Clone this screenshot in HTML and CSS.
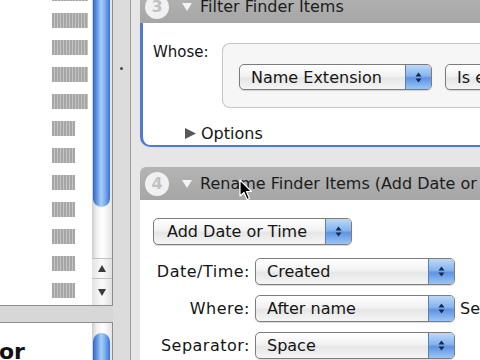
FILE: index.html
```html
<!DOCTYPE html>
<html lang="en">
<head>
  <meta charset="UTF-8">
  <title>Automator workflow</title>
  <link rel="stylesheet" href="styles.css">
</head>
<body>
  <div class="window">
    <div class="sidebar">
      <div class="pane pane-top">
        <div class="list">
          <div class="icon wide"></div>
          <div class="icon wide"></div>
          <div class="icon wide"></div>
          <div class="icon wide"></div>
          <div class="icon wide"></div>
          <div class="icon"></div>
          <div class="icon"></div>
          <div class="icon"></div>
          <div class="icon"></div>
          <div class="icon"></div>
          <div class="icon"></div>
          <div class="icon"></div>
          <div class="icon"></div>
        </div>
        <div class="scroller">
          <div class="thumb thumb-end"></div>
          <div class="track"></div>
          <div class="arrow arrow-up">
            <svg width="8" height="7" viewBox="0 0 8 7"><polygon points="0,7 4,0 8,7" fill="#3a3a3a"/></svg>
          </div>
          <div class="arrow arrow-down">
            <svg width="8" height="7" viewBox="0 0 8 7"><polygon points="0,0 8,0 4,7" fill="#3a3a3a"/></svg>
          </div>
        </div>
      </div>
      <div class="pane pane-bottom">
        <div class="list list-text">
          <div class="desc">or</div>
        </div>
        <div class="scroller">
          <div class="track track-top"></div>
          <div class="thumb thumb-start"></div>
        </div>
      </div>
    </div>

    <div class="splitter"><span class="dimple"></span></div>

    <div class="workflow">
      <!-- 3: Filter Finder Items -->
      <div class="action action-first selected">
        <div class="action-head">
          <span class="step">3</span>
          <svg class="disclose" width="10" height="8" viewBox="0 0 10 8"><polygon points="0,0 10,0 5,8" fill="#f4f4f4"/></svg>
          <span class="title">Filter Finder Items</span>
        </div>
        <div class="action-body">
          <div class="whose">
            <span class="whose-label">Whose:</span>
            <div class="criteria">
              <div class="popup w-name">
                <span class="popup-label">Name Extension</span>
                <span class="stepper">
                  <svg width="7" height="11" viewBox="0 0 7 11"><polygon points="0.5,4.5 3.5,0.5 6.5,4.5" fill="#17284a"/><polygon points="0.5,6.5 3.5,10.5 6.5,6.5" fill="#17284a"/></svg>
                </span>
              </div>
              <div class="popup w-is">
                <span class="popup-label">Is equal to</span>
              </div>
            </div>
          </div>
          <div class="options">
            <svg width="11" height="11" viewBox="0 0 11 11"><polygon points="0,0 11,5.5 0,11" fill="#585858"/></svg>
            <span>Options</span>
          </div>
        </div>
      </div>

      <!-- 4: Rename Finder Items -->
      <div class="action">
        <div class="action-head">
          <span class="step">4</span>
          <svg class="disclose" width="10" height="8" viewBox="0 0 10 8"><polygon points="0,0 10,0 5,8" fill="#f4f4f4"/></svg>
          <span class="title">Rename Finder Items (Add Date or Time)</span>
        </div>
        <div class="action-body body-rename">
          <div class="popup w-add">
            <span class="popup-label">Add Date or Time</span>
            <span class="stepper">
              <svg width="7" height="11" viewBox="0 0 7 11"><polygon points="0.5,4.5 3.5,0.5 6.5,4.5" fill="#17284a"/><polygon points="0.5,6.5 3.5,10.5 6.5,6.5" fill="#17284a"/></svg>
            </span>
          </div>
          <div class="fields">
            <div class="field">
              <span class="field-label">Date/Time:</span>
              <div class="popup w-field">
                <span class="popup-label">Created</span>
                <span class="stepper">
                  <svg width="7" height="11" viewBox="0 0 7 11"><polygon points="0.5,4.5 3.5,0.5 6.5,4.5" fill="#17284a"/><polygon points="0.5,6.5 3.5,10.5 6.5,6.5" fill="#17284a"/></svg>
                </span>
              </div>
            </div>
            <div class="field">
              <span class="field-label">Where:</span>
              <div class="popup w-field">
                <span class="popup-label">After name</span>
                <span class="stepper">
                  <svg width="7" height="11" viewBox="0 0 7 11"><polygon points="0.5,4.5 3.5,0.5 6.5,4.5" fill="#17284a"/><polygon points="0.5,6.5 3.5,10.5 6.5,6.5" fill="#17284a"/></svg>
                </span>
              </div>
              <span class="field-after">Separator:</span>
            </div>
            <div class="field">
              <span class="field-label">Separator:</span>
              <div class="popup w-field">
                <span class="popup-label">Space</span>
                <span class="stepper">
                  <svg width="7" height="11" viewBox="0 0 7 11"><polygon points="0.5,4.5 3.5,0.5 6.5,4.5" fill="#17284a"/><polygon points="0.5,6.5 3.5,10.5 6.5,6.5" fill="#17284a"/></svg>
                </span>
              </div>
            </div>
          </div>
        </div>
      </div>
    </div>

    <!-- mouse pointer over the header -->
    <svg class="cursor" width="14" height="22" viewBox="0 0 14 22">
      <polygon points="1,1 1,17 5,13.5 8,20.5 10.5,19.5 7.5,12.5 12.5,12.5" fill="#000" stroke="#fff" stroke-width="1.2" stroke-linejoin="round"/>
    </svg>
  </div>
</body>
</html>
```

FILE: styles.css
```css
body {
  margin: 0;
  width: 480px;
  height: 360px;
  overflow: hidden;
  font-family: "DejaVu Sans", "Liberation Sans", sans-serif;
  font-size: 16px;
  color: #151515;
}
.window {
  display: flex;
  height: 360px;
  position: relative;
  overflow: hidden;
  background: #e4e4e4;
}

/* left side: action list + description */
.sidebar {
  width: 113px;
  flex: none;
  display: flex;
  flex-direction: column;
  gap: 16px;
  background: #d7d7d7;
}
.pane {
  display: flex;
  background: #fff;
  border-right: 1px solid #8e8e8e;
  overflow: hidden;
}
.pane-top {
  height: 305px;
  flex: none;
  border-bottom: 1px solid #8e8e8e;
}
.pane-bottom {
  flex: 1;
  border-top: 1px solid #8e8e8e;
}
.list {
  width: 92px;
  flex: none;
  display: flex;
  flex-direction: column;
  gap: 12px;
  padding-left: 52px;
  box-sizing: border-box;
}
.icon {
  width: 23px;
  height: 15px;
  flex: none;
  background: repeating-linear-gradient(90deg, #a6a6a6 0 2px, #c4c4c4 2px 3px);
}
.icon.wide {
  width: 36px;
}
.icon:first-child {
  margin-top: -14px;
}
.list-text {
  padding-left: 0;
  padding-top: 18px;
}
.desc {
  margin-left: -1px;
  font-size: 22px;
  line-height: 22px;
  font-weight: bold;
  color: #111;
}

.scroller {
  width: 20px;
  flex: none;
  display: flex;
  flex-direction: column;
  background: linear-gradient(90deg, #cdcdcd, #f2f2f2 25%, #fff 55%, #e4e4e4);
}
.thumb {
  margin: 0 2px 0 1px;
  background: linear-gradient(90deg, #2f63c4, #5f95e6 22%, #aacdf7 48%, #78acf0 72%, #3a70d2);
}
.thumb-end {
  height: 207px;
  flex: none;
  border-radius: 0 0 9px 9px;
}
.thumb-start {
  flex: 1;
  border-radius: 9px 9px 0 0;
}
.track {
  flex: 1;
}
.track-top {
  flex: none;
  height: 10px;
}
.arrow {
  display: flex;
  justify-content: center;
  align-items: center;
  flex: none;
  border-top: 1px solid #c2c2c2;
  background: linear-gradient(90deg, #e3e3e3, #fafafa 50%, #e0e0e0);
}
.arrow-up {
  height: 19px;
}
.arrow-down {
  height: 27px;
  align-items: flex-start;
  padding-top: 10px;
  box-sizing: border-box;
}

.splitter {
  width: 17px;
  flex: none;
  display: flex;
  justify-content: center;
  background: #dcdcdc;
}
.dimple {
  width: 3px;
  height: 3px;
  margin-top: 67px;
  border-radius: 50%;
  background: #4a4a4a;
}

/* workflow area */
.workflow {
  flex: 1;
  display: flex;
  flex-direction: column;
  gap: 20px;
  padding-left: 9px;
  border-left: 1px solid #9c9c9c;
  overflow: hidden;
  background: #e6e6e6;
}
.action {
  width: 380px;
  flex: none;
}
.action-first {
  margin-top: -10px;
}
.action-head {
  height: 33px;
  display: flex;
  align-items: center;
  padding-left: 5px;
  background: linear-gradient(#b4b4b4, #a6a6a6);
  border-radius: 6px 6px 0 0;
}
.step {
  width: 24px;
  height: 24px;
  flex: none;
  border-radius: 50%;
  background: #f1f1f1;
  color: #c2c2c2;
  font-size: 16px;
  font-weight: bold;
  display: flex;
  align-items: center;
  justify-content: center;
}
.disclose {
  margin-left: 13px;
  flex: none;
}
.title {
  margin-left: 8px;
  font-size: 16px;
  white-space: nowrap;
  color: #1c1c1c;
}
.action-body {
  background: #fff;
}
.selected .action-body {
  padding: 20px 0 3px 10px;
  border-left: 3px solid #4f79d6;
  border-bottom: 2px solid #4f79d6;
  border-bottom-left-radius: 10px;
}
.whose {
  display: flex;
  align-items: flex-start;
}
.whose-label {
  width: 55px;
  flex: none;
  font-size: 15px;
  line-height: 18px;
}
.criteria {
  flex: 1;
  display: flex;
  gap: 13px;
  height: 65px;
  margin-left: 14px;
  padding: 20px 0 0 16px;
  box-sizing: border-box;
  border: 1px solid #c6c6c6;
  border-right: none;
  border-radius: 8px 0 0 8px;
  background: #f6f6f6;
}
.options {
  display: flex;
  align-items: center;
  gap: 5px;
  height: 18px;
  margin: 16px 0 0 32px;
}

.body-rename {
  padding: 18px 0 40px 13px;
}
.fields {
  display: flex;
  flex-direction: column;
  gap: 10px;
  margin-top: 13px;
}
.field {
  display: flex;
  align-items: center;
}
.field-label {
  width: 97px;
  flex: none;
  margin-right: 5px;
  text-align: right;
  letter-spacing: 0.5px;
  white-space: nowrap;
}
.field-after {
  margin-left: 5px;
  white-space: nowrap;
}

/* aqua popup buttons */
.popup {
  display: flex;
  align-items: center;
  flex: none;
  height: 27px;
  box-sizing: border-box;
  border: 1px solid #7c7c7c;
  border-radius: 5px;
  background: linear-gradient(#ffffff, #f2f2f2 45%, #e6e6e6 55%, #f5f5f5);
  box-shadow: 0 1px 1px rgba(0, 0, 0, 0.15);
  overflow: hidden;
}
.popup-label {
  flex: 1;
  padding-left: 11px;
  white-space: nowrap;
  overflow: hidden;
}
.stepper {
  width: 25px;
  flex: none;
  align-self: stretch;
  display: flex;
  align-items: center;
  justify-content: center;
  border-left: 1px solid #5a7fb8;
  background: linear-gradient(#bcd8f8, #86b4ee 45%, #5f93e3 55%, #9ac6f6);
}
.w-name {
  width: 193px;
  height: 26px;
}
.w-is {
  width: 120px;
  height: 26px;
}
.w-add {
  width: 199px;
}
.w-add .popup-label {
  padding-left: 13px;
}
.w-field {
  width: 200px;
}

.cursor {
  position: absolute;
  left: 239px;
  top: 179px;
}
```
